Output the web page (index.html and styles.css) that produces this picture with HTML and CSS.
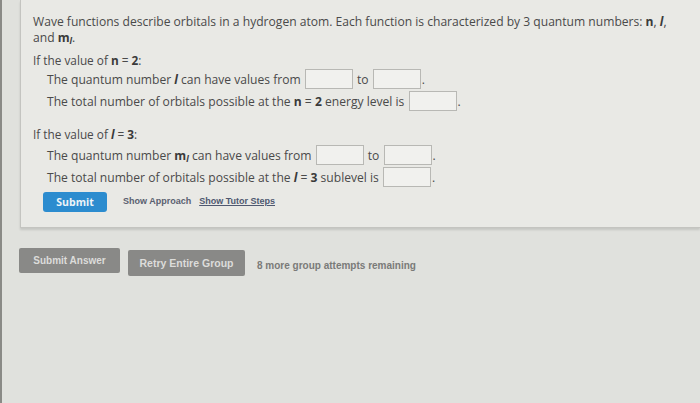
FILE: index.html
```html
<!DOCTYPE html>
<html>
<head>
<meta charset="utf-8">
<link rel="stylesheet" href="styles.css">
</head>
<body>
<div class="screen">
  <div class="card">
    <p class="intro">Wave functions describe orbitals in a hydrogen atom. Each function is characterized by 3 quantum numbers: <b>n</b>, <b><i>l</i></b>,</p>
    <p class="intro">and <b>m<sub><i>l</i></sub></b>.</p>
    <div class="part part1">
      <p class="lead">If the value of <b>n</b> = <b>2</b>:</p>
      <p class="row">The quantum number <b><i>l</i></b> can have values from <span class="box"></span> to <span class="box"></span>.</p>
      <p class="row">The total number of orbitals possible at the <b>n</b> = <b>2</b> energy level is <span class="box"></span>.</p>
    </div>
    <div class="part part2">
      <p class="lead">If the value of <b><i>l</i></b> = <b>3</b>:</p>
      <p class="row">The quantum number <b>m<sub><i>l</i></sub></b> can have values from <span class="box"></span> to <span class="box"></span>.</p>
      <p class="row">The total number of orbitals possible at the <b><i>l</i></b> = <b>3</b> sublevel is <span class="box"></span>.</p>
    </div>
    <div class="actions">
      <button class="submit">Submit</button>
      <a class="link">Show Approach</a>
      <a class="link tutor">Show Tutor Steps</a>
    </div>
  </div>
  <div class="footer">
    <button class="gray">Submit Answer</button>
    <button class="gray retry">Retry Entire Group</button>
    <span class="remaining">8 more group attempts remaining</span>
  </div>
</div>
</body>
</html>
```
FILE: styles.css
```css
html, body {
  margin: 0;
  padding: 0;
}
body {
  width: 700px;
  height: 403px;
  overflow: hidden;
  background: #e0e1dd;
  font-family: "Open Sans", "Liberation Sans", sans-serif;
  color: #4a4a4a;
}
.screen {
  height: 403px;
  border-left: 2px solid #8a8a86;
  box-sizing: border-box;
  padding-left: 18px;
}
.card {
  background: #e9e9e5;
  border: 1px solid #c4c4c0;
  border-right: none;
  border-top: none;
  box-shadow: 0 2px 2px rgba(0,0,0,0.12);
  height: 228px;
  box-sizing: border-box;
  padding: 14px 0 0 12px;
  font-size: 12.1px;
}
p { margin: 0; }
.intro {
  line-height: 16px;
  height: 16px;
  white-space: nowrap;
}
b { font-weight: 700; color: #3a3a3a; }
sub { font-size: 8.5px; vertical-align: -2px; line-height: 0; }
.part1 { margin-top: 6px; }
.lead { line-height: 16px; font-size: 11.8px; }
.part2 .lead { margin-bottom: 2px; }
.row {
  padding-left: 14px;
  height: 22px;
  display: flex;
  align-items: center;
  white-space: pre;
}
.box {
  display: inline-block;
  width: 46px;
  height: 18px;
  border: 1px solid #b8b8b4;
  background: #f1f1ee;
  margin: 0 1px;
}
.part2 { margin-top: 14px; }
.actions {
  margin-top: 4px;
  margin-left: 10px;
  display: flex;
  align-items: center;
  gap: 16px;
  font-family: "Liberation Sans", sans-serif;
}
.submit {
  width: 64px;
  height: 20px;
  background: #2c8ccf;
  color: #eef4f8;
  border: none;
  border-radius: 3px;
  font-weight: 700;
  font-size: 10.5px;
  font-family: "Open Sans", sans-serif;
  padding: 0;
}
.link {
  font-size: 9px;
  font-weight: 700;
  color: #5a6070;
  margin-top: -2px;
}
.tutor {
  margin-left: -8px;
  text-decoration: underline;
  color: #4f5870;
}
.footer {
  display: flex;
  align-items: flex-start;
  margin-top: 20px;
  margin-left: -1px;
  font-family: "Liberation Sans", sans-serif;
}
.gray {
  background: #898987;
  color: #dcdcda;
  border: none;
  border-radius: 2px;
  font-weight: 700;
  font-size: 10px;
  font-family: "Liberation Sans", sans-serif;
  padding: 0;
  width: 101px;
  height: 25px;
}
.retry {
  width: 117px;
  height: 26px;
  margin-left: 8px;
  margin-top: 2px;
  font-size: 10.5px;
}
.remaining {
  margin-left: 12px;
  margin-top: 12px;
  font-size: 10px;
  font-weight: 700;
  color: #7a7a78;
}
```
